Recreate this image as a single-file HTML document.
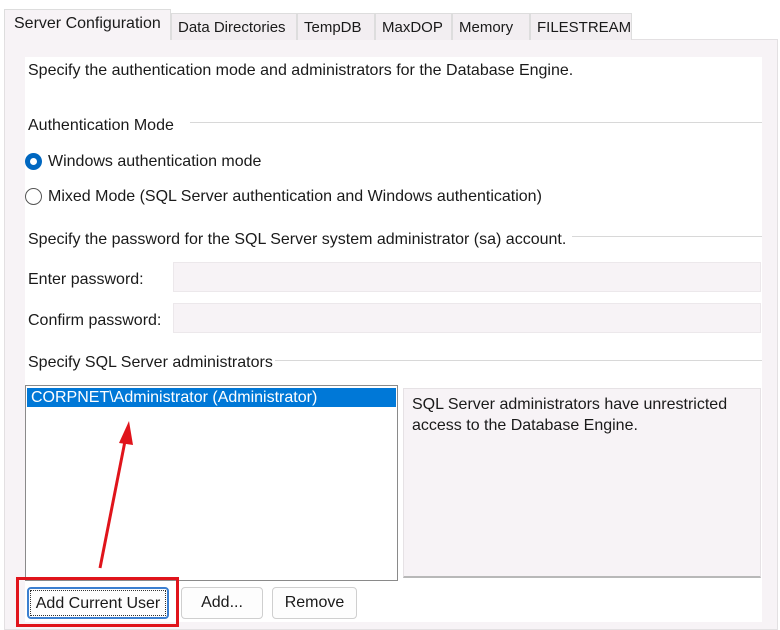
<!DOCTYPE html>
<html><head><style>
*{box-sizing:border-box;margin:0;padding:0}
body{width:780px;height:630px;background:#fff;position:relative;overflow:hidden;font-family:"Liberation Sans",sans-serif;font-size:16px;color:#1a1a1a}
.a{position:absolute;white-space:nowrap}
.tab{position:absolute;top:13px;height:27px;background:#f2eef1;border:1px solid #ddd;border-bottom:none;padding:5px 0 0 6px;font-size:15px}
.line{position:absolute;height:1px;background:#909090;border-bottom:1px solid #d8d8d8}
.box{position:absolute;background:#f7f3f6;border:1px solid #ece8eb}
.btn{position:absolute;top:587px;height:32px;background:#fdfdfd;border:1px solid #cfcfcf;border-radius:4px;text-align:center;line-height:29px;font-size:16px}
</style></head><body>
<div class="a" style="left:4px;top:39px;width:774px;height:591px;background:#f7f3f6;border:1px solid #e3e0e2"></div>
<div class="a" style="left:25px;top:57px;width:737px;height:565px;background:#fff"></div>
<div class="tab" style="left:4px;top:9px;width:167px;height:31px;background:#f7f3f6;padding-top:5px;padding-left:9px;font-size:16px">Server Configuration</div>
<div class="tab" style="left:171px;width:126px">Data Directories</div>
<div class="tab" style="left:297px;width:78px">TempDB</div>
<div class="tab" style="left:375px;width:77px">MaxDOP</div>
<div class="tab" style="left:452px;width:78px">Memory</div>
<div class="tab" style="left:530px;width:102px">FILESTREAM</div>

<div class="a" style="left:28px;top:62px">Specify the authentication mode and administrators for the Database Engine.</div>
<div class="a" style="left:28px;top:117px">Authentication Mode</div>
<div class="line" style="left:190px;top:122px;width:572px"></div>
<div class="a" style="left:25px;top:153px;width:17px;height:17px;border-radius:50%;background:#0067c0"><div style="position:absolute;left:5px;top:5px;width:7px;height:7px;border-radius:50%;background:#fff"></div></div>
<div class="a" style="left:48px;top:153px">Windows authentication mode</div>
<div class="a" style="left:25px;top:188px;width:17px;height:17px;border-radius:50%;border:1px solid #555;background:#fff"></div>
<div class="a" style="left:48px;top:188px">Mixed Mode (SQL Server authentication and Windows authentication)</div>
<div class="a" style="left:28px;top:231px">Specify the password for the SQL Server system administrator (sa) account.</div>
<div class="line" style="left:572px;top:236px;width:190px"></div>
<div class="a" style="left:28px;top:271px">Enter password:</div>
<div class="box" style="left:173px;top:262px;width:588px;height:30px"></div>
<div class="a" style="left:28px;top:312px">Confirm password:</div>
<div class="box" style="left:173px;top:303px;width:588px;height:30px"></div>
<div class="a" style="left:28px;top:354px">Specify SQL Server administrators</div>
<div class="line" style="left:275px;top:360px;width:487px"></div>
<div class="a" style="left:25px;top:385px;width:373px;height:196px;border:1px solid #8a8a8a;background:#fff"></div>
<div class="a" style="left:27px;top:388px;width:369px;height:19px;background:#0078d7;color:#fff;padding-left:4px;line-height:19px">CORPNET\Administrator (Administrator)</div>
<div class="a" style="left:403px;top:388px;width:358px;height:190px;background:#f7f3f6;border:1px solid #e6e2e5;border-bottom:2px solid #b8b8b8;white-space:normal;padding:5px 7px 5px 8px;line-height:21px">SQL Server administrators have unrestricted access to the Database Engine.</div>

<div class="btn" style="left:27px;width:142px;border:2px solid #3b7fd0"><div style="position:absolute;left:1px;top:1px;right:1px;bottom:1px;border:1px dotted #333;line-height:25px">Add Current User</div></div>
<div class="btn" style="left:181px;width:82px">Add...</div>
<div class="btn" style="left:272px;width:85px">Remove</div>
<div class="a" style="left:16px;top:577px;width:163px;height:50px;border:3px solid #e0141b"></div>
<svg class="a" style="left:0;top:0" width="780" height="630"><line x1="100" y1="568" x2="126" y2="436" stroke="#e0141b" stroke-width="3"/><polygon points="129,421 119,443 133,445" fill="#e0141b"/></svg>
</body></html>
